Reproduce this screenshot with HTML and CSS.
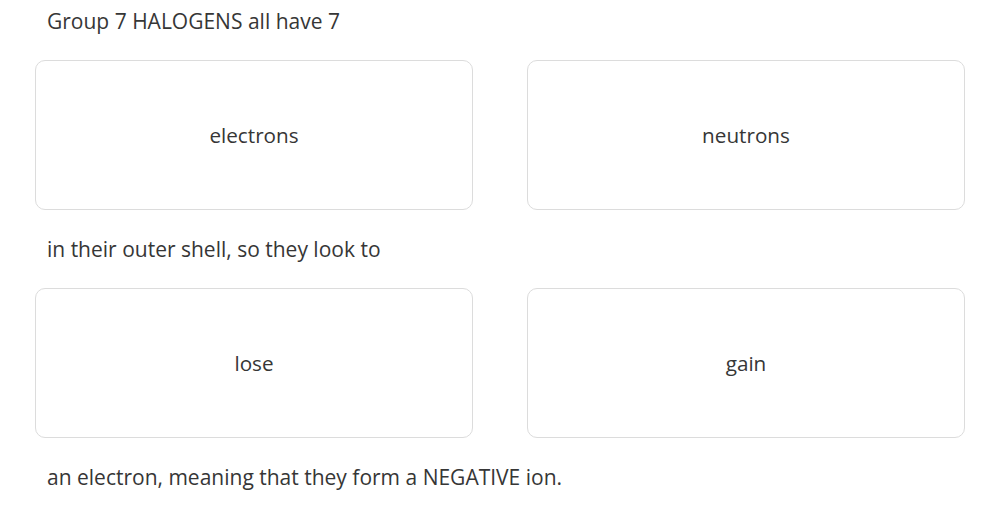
FILE: index.html
```html
<!DOCTYPE html>
<html lang="en">
<head>
<meta charset="utf-8">
<title>Halogens</title>
<link rel="stylesheet" href="styles.css">
</head>
<body>
<main class="quiz">
  <p class="prompt prompt-first">Group 7 HALOGENS all have 7</p>
  <div class="choices">
    <button class="choice" type="button">electrons</button>
    <button class="choice" type="button">neutrons</button>
  </div>
  <p class="prompt">in their outer shell, so they look to</p>
  <div class="choices">
    <button class="choice" type="button">lose</button>
    <button class="choice" type="button">gain</button>
  </div>
  <p class="prompt">an electron, meaning that they form a NEGATIVE ion.</p>
</main>
</body>
</html>
```
FILE: styles.css
```css
html, body {
  margin: 0;
  padding: 0;
  background: #fff;
}

body {
  font-family: "Open Sans", "Liberation Sans", sans-serif;
  color: #363636;
}

.quiz {
  width: 930px;
  padding: 8px 0 0 35px;
}

.prompt {
  margin: 26px 0 25px;
  padding-left: 12px;
  font-size: 21px;
  line-height: 27px;
}

.prompt-first {
  margin-top: 0;
}

.choices {
  display: grid;
  grid-template-columns: 1fr 1fr;
  column-gap: 54px;
}

.choice {
  height: 150px;
  box-sizing: border-box;
  border: 1px solid #dcdcdc;
  border-radius: 10px;
  background: #fff;
  font-family: inherit;
  font-size: 20.7px;
  color: #363636;
  cursor: pointer;
}
```
